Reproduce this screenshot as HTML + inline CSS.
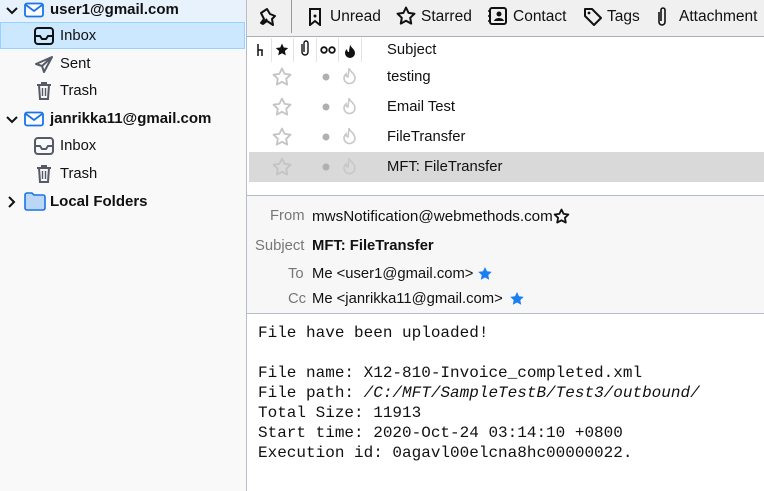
<!DOCTYPE html><html><head><style>
*{margin:0;padding:0;box-sizing:border-box}
body{width:764px;height:491px;overflow:hidden;background:#fff;font-family:"Liberation Sans",sans-serif;font-size:14.8px;color:#111;position:relative}
.a{position:absolute;white-space:nowrap}
svg{position:absolute}
</style></head><body>
<!-- left pane -->
<div class="a" style="left:0;top:0;width:246px;height:491px;background:#f9f9f9"></div>
<div class="a" style="left:0;top:0;width:246px;height:22px;background:#e8f2fc"></div>
<div class="a" style="left:0;top:22px;width:245px;height:27px;background:#cce8ff;border:1px solid #99d1ff"></div>
<div class="a" style="left:246px;top:0;width:1px;height:491px;background:#b5bdc8"></div>
<svg style="left:5px;top:4px" width="14" height="14"><path d="M2 4l5 5 5-5" stroke="#111" stroke-width="2" fill="none"/></svg>
<svg style="left:5px;top:113px" width="14" height="14"><path d="M2 4l5 5 5-5" stroke="#111" stroke-width="2" fill="none"/></svg>
<svg style="left:5px;top:195px" width="14" height="14"><path d="M4 2l5 5-5 5" stroke="#111" stroke-width="2" fill="none"/></svg>
<svg style="left:24px;top:2px" width="20" height="16"><rect x="1" y="1.5" width="18" height="13" rx="2" fill="#fff" stroke="#1a73e8" stroke-width="1.8"/><path d="M2 3l8 6 8-6" stroke="#1a73e8" stroke-width="1.8" fill="none"/></svg>
<svg style="left:24px;top:111px" width="20" height="16"><rect x="1" y="1.5" width="18" height="13" rx="2" fill="#fff" stroke="#1a73e8" stroke-width="1.8"/><path d="M2 3l8 6 8-6" stroke="#1a73e8" stroke-width="1.8" fill="none"/></svg>
<div class="a" style="left:50px;top:1px;font-weight:bold;font-size:15px">user1@gmail.com</div>
<div class="a" style="left:50px;top:110px;font-weight:bold;font-size:15px">janrikka11@gmail.com</div>
<svg style="left:34px;top:27px" width="20" height="18"><rect x="1" y="1" width="18" height="16" rx="3" fill="none" stroke="#111" stroke-width="2"/><path d="M1 9h5l2 3h4l2-3h5" stroke="#111" stroke-width="2" fill="none"/></svg>
<div class="a" style="left:60px;top:28px">Inbox</div>
<svg style="left:35px;top:56px" width="18" height="17"><path d="M17 1L1 8l6 2 2 6z M17 1L7 10" stroke="#555a68" stroke-width="2" fill="none" stroke-linejoin="round"/></svg>
<div class="a" style="left:60px;top:56px">Sent</div>
<svg style="left:36px;top:81px" width="16" height="20"><path d="M1 4h14M6 4V2h4v2M3 4l1 14h8l1-14" stroke="#555a68" stroke-width="2" fill="none"/><path d="M6.5 7v8M9.5 7v8" stroke="#555a68" stroke-width="1.4"/></svg>
<div class="a" style="left:60px;top:83px">Trash</div>
<svg style="left:34px;top:137px" width="20" height="18"><rect x="1" y="1" width="18" height="16" rx="3" fill="none" stroke="#555a68" stroke-width="2"/><path d="M1 9h5l2 3h4l2-3h5" stroke="#555a68" stroke-width="2" fill="none"/></svg>
<div class="a" style="left:60px;top:138px">Inbox</div>
<svg style="left:36px;top:164px" width="16" height="20"><path d="M1 4h14M6 4V2h4v2M3 4l1 14h8l1-14" stroke="#555a68" stroke-width="2" fill="none"/><path d="M6.5 7v8M9.5 7v8" stroke="#555a68" stroke-width="1.4"/></svg>
<div class="a" style="left:60px;top:166px">Trash</div>
<svg style="left:24px;top:192px" width="22" height="19"><path d="M1 3a2 2 0 0 1 2-2h5l2 2h9a2 2 0 0 1 2 2v11a2 2 0 0 1-2 2H3a2 2 0 0 1-2-2z" fill="#bcd6f5" stroke="#1a73e8" stroke-width="1.6"/></svg>
<div class="a" style="left:50px;top:193px;font-weight:bold;font-size:15px">Local Folders</div>
<!-- toolbar -->
<div class="a" style="left:247px;top:0;width:517px;height:37px;background:#f0f0f0;border-bottom:1px solid #a8b0bc"></div>
<div class="a" style="left:291px;top:0;width:1px;height:33px;background:#999"></div>
<svg style="left:259px;top:7px" width="20" height="20"><path d="M8 2l3 5 5 2-3 3 1 6-6-4-4 3-2-1 3-4-3-6z" fill="none" stroke="#111" stroke-width="2" stroke-linejoin="round"/><path d="M3 17l5-5" stroke="#111" stroke-width="2"/></svg>
<svg style="left:308px;top:8px" width="14" height="18"><path d="M2 1h10v16l-5-4-5 4z" fill="none" stroke="#111" stroke-width="2"/><circle cx="7" cy="8" r="1.5" fill="#111"/></svg>
<div class="a" style="left:330px;top:8px;font-size:15.5px">Unread</div>
<svg style="left:396px;top:6px" width="20" height="20"><path d="M10 1.5l2.6 5.4 5.9.8-4.3 4.1 1 5.8L10 14.8l-5.2 2.8 1-5.8L1.5 7.7l5.9-.8z" fill="none" stroke="#111" stroke-width="2" stroke-linejoin="round"/></svg>
<div class="a" style="left:421px;top:8px;font-size:15.5px">Starred</div>
<svg style="left:488px;top:6px" width="20" height="20"><rect x="2" y="2" width="16" height="16" rx="2" fill="none" stroke="#111" stroke-width="2"/><circle cx="11" cy="8" r="2.5" fill="#111"/><path d="M6 15c1-4 9-4 10 0z" fill="#111"/><path d="M0 5h3M0 10h3M0 15h3" stroke="#111" stroke-width="1.5"/></svg>
<div class="a" style="left:513px;top:8px;font-size:15.5px">Contact</div>
<svg style="left:583px;top:7px" width="20" height="20"><path d="M2 2h7l9 9-7 7-9-9z" fill="none" stroke="#111" stroke-width="2" stroke-linejoin="round"/><circle cx="6" cy="6" r="1.4" fill="#111"/></svg>
<div class="a" style="left:607px;top:8px;font-size:15.5px">Tags</div>
<svg style="left:656px;top:6px" width="12" height="22"><path d="M3 6v10a3 3 0 0 0 6 0V4a2 2 0 0 0-4 0v11" fill="none" stroke="#111" stroke-width="1.6"/></svg>
<div class="a" style="left:679px;top:8px;font-size:15.5px">Attachment</div>
<!-- column header -->
<div class="a" style="left:271px;top:38px;width:1px;height:24px;background:#e3e3e3"></div>
<div class="a" style="left:293px;top:38px;width:1px;height:24px;background:#e3e3e3"></div>
<div class="a" style="left:316px;top:38px;width:1px;height:24px;background:#e3e3e3"></div>
<div class="a" style="left:338px;top:38px;width:1px;height:24px;background:#e3e3e3"></div>
<div class="a" style="left:361px;top:38px;width:1px;height:24px;background:#e3e3e3"></div>
<svg style="left:256px;top:43px" width="8" height="14"><path d="M2 1v12M2 7h4v6" stroke="#111" stroke-width="1.5" fill="none"/></svg>
<svg style="left:275px;top:43px" width="14" height="14"><path d="M7 .5l1.8 4 4.4.5-3.3 3 .9 4.4L7 10.2l-3.8 2.2.9-4.4L.8 5l4.4-.5z" fill="#111"/></svg>
<svg style="left:300px;top:40px" width="10" height="18"><path d="M2 4v8a3 3 0 0 0 6 0V3a2 2 0 0 0-4 0v9" fill="none" stroke="#111" stroke-width="1.4"/></svg>
<svg style="left:320px;top:46px" width="16" height="8"><circle cx="4" cy="4" r="2.8" fill="none" stroke="#111" stroke-width="1.8"/><circle cx="12" cy="4" r="2.8" fill="none" stroke="#111" stroke-width="1.8"/></svg>
<svg style="left:344px;top:43px" width="12" height="15"><path d="M6 1c0 3 5 5 5 9a5 5 0 0 1-10 0c0-2 1-3 2-4 0 2 1 3 2 3 0-3 1-5 1-8z" fill="#111"/></svg>
<div class="a" style="left:387px;top:42px">Subject</div>
<!-- rows -->
<div class="a" style="left:249px;top:152px;width:515px;height:30px;background:#d9d9d9"></div>
<div class="a" style="left:387px;top:69px">testing</div>
<div class="a" style="left:387px;top:99px">Email Test</div>
<div class="a" style="left:387px;top:129px">FileTransfer</div>
<div class="a" style="left:387px;top:159px">MFT: FileTransfer</div>
<svg style="left:272px;top:67px" width="90" height="120">
<g id="r"><path d="M10 1.5l2.6 5.4 5.9.8-4.3 4.1 1 5.8L10 14.8l-5.2 2.8 1-5.8L1.5 7.7l5.9-.8z" fill="none" stroke="#c4c4c4" stroke-width="1.8" stroke-linejoin="round"/><circle cx="54" cy="10" r="3.5" fill="#b0b0b0"/><path d="M77 1c0 3 6 5 6 10a5.5 5.5 0 0 1-11 0c0-2 1-3 2-4 0 2 1 3 2 3 0-3 1-5 1-9z" fill="none" stroke="#c8c8c8" stroke-width="1.6"/></g>
<use href="#r" y="30"/><use href="#r" y="60"/><use href="#r" y="90"/></svg>
<!-- message header -->
<div class="a" style="left:247px;top:195px;width:517px;height:119px;background:#f7f7f7;border-top:1px solid #b5bdc8;border-bottom:1px solid #b5bdc8"></div>
<div class="a" style="left:270px;top:208px;color:#777">From</div>
<div class="a" style="left:312px;top:208px;font-size:15.2px">mwsNotification@webmethods.com</div>
<svg style="left:553px;top:208px" width="17" height="17"><path d="M8.5 1.5l2.1 4.4 4.8.6-3.5 3.3.9 4.8-4.3-2.3-4.3 2.3.9-4.8L1.6 6.5l4.8-.6z" fill="none" stroke="#111" stroke-width="1.8" stroke-linejoin="round"/></svg>
<div class="a" style="left:255px;top:238px;color:#777">Subject</div>
<div class="a" style="left:312px;top:238px;font-weight:bold">MFT: FileTransfer</div>
<div class="a" style="left:288px;top:266px;color:#777">To</div>
<div class="a" style="left:312px;top:266px">Me &lt;user1@gmail.com&gt;</div>
<div class="a" style="left:288px;top:291px;color:#777">Cc</div>
<div class="a" style="left:312px;top:291px">Me &lt;janrikka11@gmail.com&gt;</div>
<svg style="left:477px;top:266px" width="16" height="16"><path d="M8 1l2 4.3 4.7.6-3.4 3.2.9 4.7L8 11.5l-4.2 2.3.9-4.7L1.3 5.9 6 5.3z" fill="#1a7ff0"/></svg>
<svg style="left:509px;top:291px" width="16" height="16"><path d="M8 1l2 4.3 4.7.6-3.4 3.2.9 4.7L8 11.5l-4.2 2.3.9-4.7L1.3 5.9 6 5.3z" fill="#1a7ff0"/></svg>
<!-- body -->
<pre class="a" style="left:258px;top:323px;white-space:pre;font-family:'Liberation Mono',monospace;font-size:16px;line-height:20px;color:#111">File have been uploaded!

File name: X12-810-Invoice_completed.xml
File path: <i>/C:/MFT/SampleTestB/Test3/outbound/</i>
Total Size: 11913
Start time: 2020-Oct-24 03:14:10 +0800
Execution id: 0agavl00elcna8hc00000022.</pre>
</body></html>
